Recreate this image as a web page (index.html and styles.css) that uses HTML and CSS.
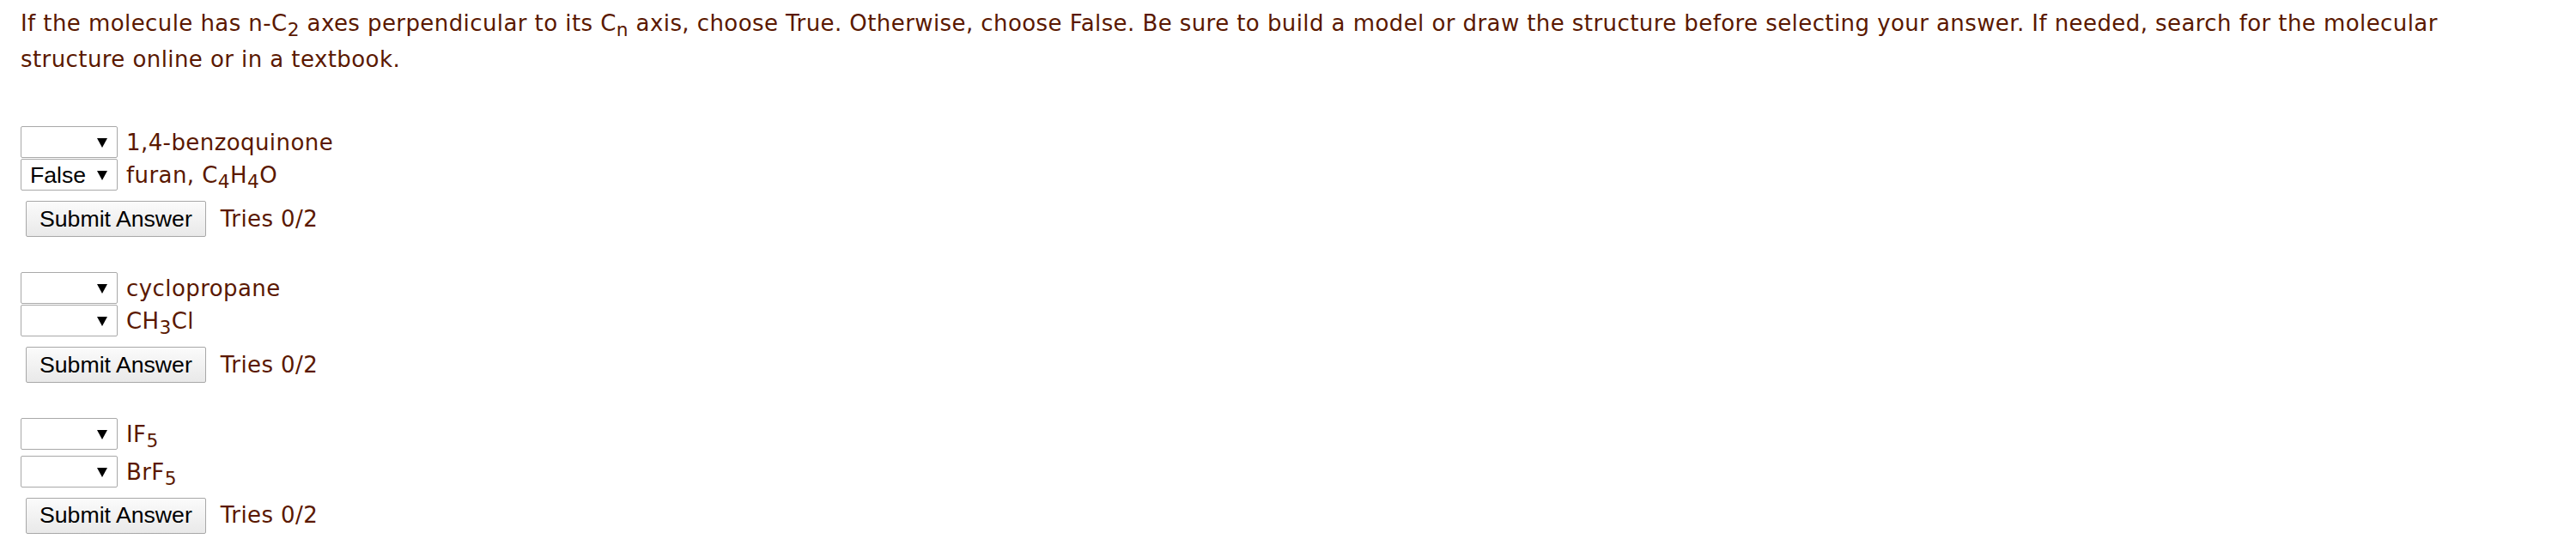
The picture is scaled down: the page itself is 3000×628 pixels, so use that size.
FILE: index.html
```html
<!DOCTYPE html>
<html lang="en">
<head>
<meta charset="utf-8">
<title>Symmetry question</title>
<link rel="stylesheet" href="styles.css">
</head>
<body>
<div class="page">
  <p class="prompt">If the molecule has n-C<sub>2</sub> axes perpendicular to its C<sub>n</sub> axis, choose True. Otherwise, choose False. Be sure to build a model or draw the structure before selecting your answer. If needed, search for the molecular structure online or in a textbook.</p>

  <div class="group">
    <div class="row">
      <span class="sel"><select><option></option><option>True</option><option>False</option></select><svg class="arrow" viewBox="0 0 12 11" width="12" height="11"><polygon points="0,0 12,0 6,11"/></svg></span>
      <span class="label">1,4-benzoquinone</span>
    </div>
    <div class="row">
      <span class="sel"><select><option>False</option><option>True</option><option></option></select><svg class="arrow" viewBox="0 0 12 11" width="12" height="11"><polygon points="0,0 12,0 6,11"/></svg></span>
      <span class="label">furan, C<sub>4</sub>H<sub>4</sub>O</span>
    </div>
    <div class="actions">
      <button class="submit" type="button">Submit Answer</button>
      <span class="tries">Tries 0/2</span>
    </div>
  </div>

  <div class="group">
    <div class="row">
      <span class="sel"><select><option></option><option>True</option><option>False</option></select><svg class="arrow" viewBox="0 0 12 11" width="12" height="11"><polygon points="0,0 12,0 6,11"/></svg></span>
      <span class="label">cyclopropane</span>
    </div>
    <div class="row">
      <span class="sel"><select><option></option><option>True</option><option>False</option></select><svg class="arrow" viewBox="0 0 12 11" width="12" height="11"><polygon points="0,0 12,0 6,11"/></svg></span>
      <span class="label">CH<sub>3</sub>Cl</span>
    </div>
    <div class="actions">
      <button class="submit" type="button">Submit Answer</button>
      <span class="tries">Tries 0/2</span>
    </div>
  </div>

  <div class="group">
    <div class="row">
      <span class="sel"><select><option></option><option>True</option><option>False</option></select><svg class="arrow" viewBox="0 0 12 11" width="12" height="11"><polygon points="0,0 12,0 6,11"/></svg></span>
      <span class="label">IF<sub>5</sub></span>
    </div>
    <div class="row">
      <span class="sel"><select><option></option><option>True</option><option>False</option></select><svg class="arrow" viewBox="0 0 12 11" width="12" height="11"><polygon points="0,0 12,0 6,11"/></svg></span>
      <span class="label">BrF<sub>5</sub></span>
    </div>
    <div class="actions">
      <button class="submit" type="button">Submit Answer</button>
      <span class="tries">Tries 0/2</span>
    </div>
  </div>
</div>
</body>
</html>
```

FILE: styles.css
```css
html, body {
  margin: 0;
  padding: 0;
  background: #ffffff;
}

body {
  font-family: "DejaVu Sans", Verdana, sans-serif;
  font-size: 26px;
  letter-spacing: 0.42px;
  color: #5a1800;
}

.page {
  padding: 6px 24px 0 24px;
}

.prompt {
  margin: 0;
  line-height: 42px;
  max-width: 2900px;
}

.prompt sub {
  line-height: 1;
}

.group {
  margin-top: 41px;
}

.group:first-of-type {
  margin-top: 57px;
}

.row {
  display: flex;
  align-items: flex-start;
}

.sel {
  position: relative;
  display: inline-block;
  width: 113px;
  height: 37px;
  flex: none;
}

.sel select {
  appearance: none;
  -webkit-appearance: none;
  box-sizing: border-box;
  width: 113px;
  height: 37px;
  margin: 0;
  padding: 0 30px 0 10px;
  border: 1px solid #a9a9a9;
  border-radius: 2px;
  background: #ffffff;
  color: #000000;
  font-family: "Liberation Sans", Arial, sans-serif;
  font-size: 26.67px;
  letter-spacing: 0;
}

.arrow {
  position: absolute;
  right: 12px;
  top: 14px;
  fill: #000000;
  pointer-events: none;
}

.label {
  margin-left: 10px;
  line-height: 38px;
}

.label sub {
  line-height: 32px;
}

.actions {
  display: flex;
  align-items: baseline;
  margin-top: 6px;
  margin-left: 6px;
}

.submit {
  box-sizing: border-box;
  height: 42px;
  margin: 0;
  padding: 0 15px;
  border: 1px solid #a8a8a8;
  border-radius: 2px;
  background: linear-gradient(#fbfbfb, #e9e9e9);
  color: #000000;
  font-family: "Liberation Sans", Arial, sans-serif;
  font-size: 26.67px;
  letter-spacing: 0;
}

.tries {
  margin-left: 17px;
}
```
